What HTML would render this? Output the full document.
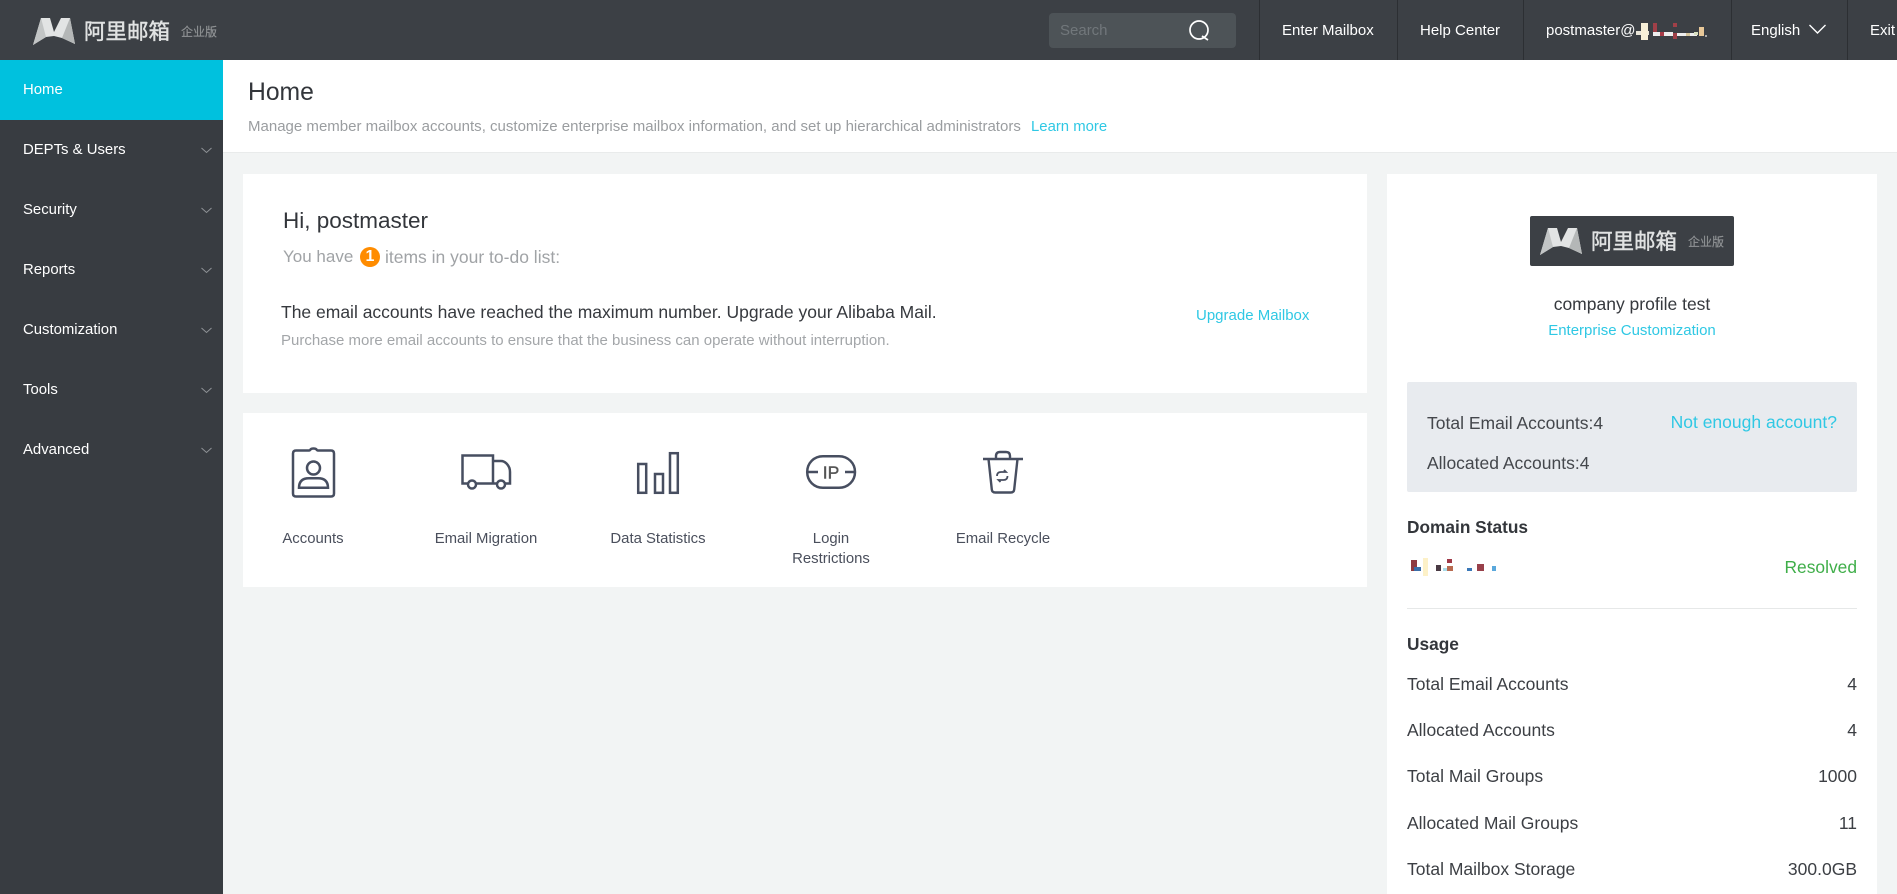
<!DOCTYPE html>
<html><head><meta charset="utf-8"><title>Home</title>
<style>
html,body{margin:0;padding:0;width:1897px;height:894px;overflow:hidden;background:#f2f4f4;font-family:"Liberation Sans",Arial,sans-serif;color:#3c3f44}
div,span,a{position:absolute;white-space:nowrap;line-height:20px}
svg{position:absolute;overflow:visible}
.f15{font-size:15px}.f17{font-size:17.5px}
.b{color:#2fc8e4}
.nav{left:23px;font-size:14.9px;color:#fff}
.lab{font-size:14.9px;color:#4a4f5c;text-align:center;width:140px}
.cn{font-family:"Noto Sans CJK SC",sans-serif;color:#e0e2e2;-webkit-text-stroke:.45px #e0e2e2}
.cn2{font-family:"Noto Sans CJK SC",sans-serif;color:#8f9294;-webkit-text-stroke:.2px #8f9294}
.rv{right:40px;font-size:17.5px}
.rl{left:1407px;font-size:17.5px}
.v{width:1px;top:0;height:60px;background:#2c2f33}
.hd{color:#fff;font-size:15px;top:21px}
</style></head><body>

<div style="left:0;top:0;width:1897px;height:60px;background:#3c4045"></div>
<div style="left:0;top:60px;width:223px;height:834px;background:#383c41"></div>
<div style="left:0;top:60px;width:223px;height:60px;background:#00c1de"></div>
<div style="left:223px;top:60px;width:1674px;height:92px;background:#fff;border-bottom:1px solid #e9ebeb"></div>

<!-- header logo -->
<svg style="left:33px;top:17px" width="44" height="28" viewBox="0 0 44 28">
<polygon points="0,28 8,1 17,1 21,15 28,1 37,1 42,27 29,21 21,19 13,20" fill="#e2e4e4"/>
<polygon points="0,28 8,1 13,20" fill="#c2c5c5"/>
<polygon points="29,21 37,1 42,27" fill="#b4b7b7"/>
</svg>
<div class="cn" style="left:84px;top:20px;font-size:21.5px;line-height:22px;">阿里邮箱</div>
<div class="cn2" style="left:181px;top:22px;font-size:12px">企业版</div>

<!-- search -->
<div style="left:1049px;top:13px;width:187px;height:35px;background:#4d5357;border-radius:4px"></div>
<div style="left:1060px;top:21px;font-size:15px;color:#71777b">Search</div>
<svg style="left:1188px;top:19px" width="22" height="24" viewBox="0 0 22 24" fill="none" stroke="#fff" stroke-width="1.7"><circle cx="11" cy="11" r="9"/><path d="M14 17l6 4"/></svg>

<div class="v" style="left:1259px"></div>
<div class="v" style="left:1397px"></div>
<div class="v" style="left:1523px"></div>
<div class="v" style="left:1731px"></div>
<div class="v" style="left:1847px"></div>
<div class="hd" style="left:1282px">Enter Mailbox</div>
<div class="hd" style="left:1420px">Help Center</div>
<div class="hd" style="left:1546px">postmaster@</div>
<svg style="left:1636px;top:21px" width="72" height="24" shape-rendering="crispEdges">
<rect x="0" y="10" width="13" height="4" fill="#e8e4d8"/><rect x="5" y="2" width="7" height="17" fill="#f8f0d8"/>
<rect x="17" y="2" width="4" height="10" fill="#a04048"/><rect x="17" y="11" width="20" height="4" fill="#eeeeee"/><rect x="24" y="11" width="4" height="4" fill="#a83c48"/>
<rect x="37" y="2" width="4" height="4" fill="#a04048"/><rect x="37" y="12" width="4" height="6" fill="#a04048"/><rect x="41" y="12" width="20" height="3" fill="#eeeeee"/><rect x="50" y="12" width="4" height="3" fill="#d8c8a0"/><rect x="58" y="11" width="4" height="3" fill="#d8e0c0"/>
<rect x="63" y="6" width="5" height="9" fill="#e8c898"/><rect x="69" y="14" width="2" height="2" fill="#aaaaaa"/>
</svg>
<div class="hd" style="left:1751px">English</div>
<svg style="left:1809px;top:24px" width="17" height="10" fill="none" stroke="#fff" stroke-width="1.4"><path d="M.5 1l8 8 8-8"/></svg>
<div class="hd" style="left:1870px">Exit</div>

<!-- sidebar -->
<div class="nav" style="top:80px">Home</div>
<div class="nav" style="top:140px">DEPTs &amp; Users</div>
<div class="nav" style="top:200px">Security</div>
<div class="nav" style="top:260px">Reports</div>
<div class="nav" style="top:320px">Customization</div>
<div class="nav" style="top:380px">Tools</div>
<div class="nav" style="top:440px">Advanced</div>
<svg style="left:201px;top:147px" width="11" height="7" fill="none" stroke="#8e9296" stroke-width="1"><path d="M.5 1l5 4.500 5-4.500"/></svg>
<svg style="left:201px;top:207px" width="11" height="7" fill="none" stroke="#8e9296" stroke-width="1"><path d="M.5 1l5 4.500 5-4.500"/></svg>
<svg style="left:201px;top:267px" width="11" height="7" fill="none" stroke="#8e9296" stroke-width="1"><path d="M.5 1l5 4.500 5-4.500"/></svg>
<svg style="left:201px;top:327px" width="11" height="7" fill="none" stroke="#8e9296" stroke-width="1"><path d="M.5 1l5 4.500 5-4.500"/></svg>
<svg style="left:201px;top:387px" width="11" height="7" fill="none" stroke="#8e9296" stroke-width="1"><path d="M.5 1l5 4.500 5-4.500"/></svg>
<svg style="left:201px;top:447px" width="11" height="7" fill="none" stroke="#8e9296" stroke-width="1"><path d="M.5 1l5 4.500 5-4.500"/></svg>

<!-- title -->
<div style="left:248px;top:83px;font-size:24.7px;color:#33363b">Home</div>
<div style="left:248px;top:117px;font-size:15.02px;color:#9a9da0">Manage member mailbox accounts, customize enterprise mailbox information, and set up hierarchical administrators</div>
<div class="b" style="left:1031px;top:117px;font-size:14.9px">Learn more</div>

<!-- card 1 -->
<div style="left:243px;top:174px;width:1124px;height:219px;background:#fff"></div>
<div style="left:283px;top:211px;font-size:22.5px;color:#33363b">Hi, postmaster</div>
<div style="left:283px;top:247px;font-size:17px;color:#a0a3a6">You have</div>
<div style="left:360px;top:247px;width:20px;height:20px;border-radius:50%;background:#ff8c00;color:#fff;font-size:16px;font-weight:bold;text-align:center">1</div>
<div style="left:385px;top:247px;font-size:17.5px;color:#a0a3a6">items in your to-do list:</div>
<div class="f17" style="left:281px;top:302px;color:#36393e">The email accounts have reached the maximum number. Upgrade your Alibaba Mail.</div>
<div class="f15" style="left:281px;top:331px;color:#a3a6a9">Purchase more email accounts to ensure that the business can operate without interruption.</div>
<div class="b f15" style="left:1196px;top:306px">Upgrade Mailbox</div>

<!-- card 2 -->
<div style="left:243px;top:413px;width:1124px;height:174px;background:#fff"></div>
<svg style="left:291px;top:448px" width="46" height="50" viewBox="0 0 46 50" fill="none" stroke="#474e60" stroke-width="2.5">
<path d="M5 2.500h13q1 0 1.500-1 .7-1 3-1t3 1q.5 1 1.500 1h13q3 0 3 3v40q0 3-3 3H5q-3 0-3-3v-40q0-3 3-3z"/>
<circle cx="22.500" cy="20" r="6.500"/>
<path d="M8 39.800q0-9.500 10-9.500h9q10 0 10 9.500z"/>
</svg>
<svg style="left:461px;top:454px" width="51" height="36" viewBox="0 0 51 36" fill="none" stroke="#474e60" stroke-width="2.500">
<path d="M7 29.500H1.500V1.500H32V29"/>
<path d="M32 7h8q3 0 5.500 2.500 3.500 3.500 3.500 8.500v11.500H44"/>
<path d="M15 29.500h21"/>
<circle cx="11" cy="30.500" r="4"/>
<circle cx="40" cy="30.500" r="4"/>
</svg>
<svg style="left:637px;top:452px" width="42" height="42" viewBox="0 0 42 42" fill="none" stroke="#474e60" stroke-width="2.500">
<rect x="1.200" y="12" width="8" height="28.800"/>
<rect x="18" y="22" width="8" height="18.800"/>
<rect x="33" y="1.200" width="7.800" height="39.600"/>
</svg>
<svg style="left:806px;top:455px" width="51" height="35" viewBox="0 0 51 35" fill="none" stroke="#474e60" stroke-width="2.500">
<path d="M1.200 17C1.200 8 8 1.200 17 1.200h16C42 1.200 49 8 49 17s-7 15.800-16 15.800H17C8 32.800 1.200 26 1.200 17z"/>
<path d="M1 17h11M39 17h11"/>
<text x="25" y="23.500" text-anchor="middle" font-size="17.500" fill="#555" stroke="#555" stroke-width=".4" font-family="Liberation Sans,sans-serif">IP</text>
</svg>
<svg style="left:983px;top:451px" width="41" height="43" viewBox="0 0 41 43" fill="none" stroke="#474e60" stroke-width="2.400">
<path d="M0 8h40"/>
<path d="M13 8V5q0-4 4-4h6q4 0 4 4v3"/>
<path d="M5.500 8l3.300 30.500q.3 3 3.500 3h15.400q3.200 0 3.500-3L34.500 8"/>
<path d="M14 25q0-4 4-4h5l-2-2M24.500 25q0 4-4 4h-5l2 2" stroke-width="1.800"/>
</svg>
<div class="lab" style="left:243px;top:529px">Accounts</div>
<div class="lab" style="left:416px;top:529px">Email Migration</div>
<div class="lab" style="left:588px;top:529px">Data Statistics</div>
<div class="lab" style="left:761px;top:529px">Login</div>
<div class="lab" style="left:761px;top:549px">Restrictions</div>
<div class="lab" style="left:933px;top:529px">Email Recycle</div>

<!-- right card -->
<div style="left:1387px;top:174px;width:490px;height:720px;background:#fff"></div>
<div style="left:1530px;top:216px;width:204px;height:50px;background:#3c4045;border-radius:2px"></div>
<svg style="left:1540px;top:227px" width="44" height="28" viewBox="0 0 44 28">
<polygon points="0,28 8,1 17,1 21,15 28,1 37,1 42,27 29,21 21,19 13,20" fill="#e2e4e4"/>
<polygon points="0,28 8,1 13,20" fill="#c2c5c5"/>
<polygon points="29,21 37,1 42,27" fill="#b4b7b7"/>
</svg>
<div class="cn" style="left:1591px;top:230px;font-size:21.5px;line-height:22px">阿里邮箱</div>
<div class="cn2" style="left:1688px;top:232px;font-size:12px">企业版</div>
<div class="f17" style="left:1487px;width:290px;text-align:center;top:294px;color:#36393e">company profile test</div>
<div class="b f15" style="left:1487px;width:290px;text-align:center;top:321px">Enterprise Customization</div>

<div style="left:1407px;top:382px;width:450px;height:110px;background:#e8ebef;border-radius:2px"></div>
<div class="f17" style="left:1427px;top:413px;color:#44474c">Total Email Accounts:4</div>
<div class="f17" style="left:1427px;top:453px;color:#44474c">Allocated Accounts:4</div>
<div class="b" style="right:60px;top:412px;font-size:17.5px">Not enough account?</div>

<div style="left:1407px;top:517px;font-size:17.3px;font-weight:bold;color:#33363b">Domain Status</div>
<svg style="left:1409px;top:558px" width="88" height="18" shape-rendering="crispEdges">
<rect x="2" y="2" width="6" height="11" fill="#8e3a40"/><rect x="5" y="9" width="7" height="4" fill="#3a6ea8"/>
<rect x="14" y="0" width="5" height="18" fill="#fdf1c8"/>
<rect x="27" y="7" width="5" height="6" fill="#4a3a44"/><rect x="34" y="10" width="6" height="3" fill="#a8dcea"/>
<rect x="38" y="1" width="5" height="4" fill="#a03a48"/><rect x="38" y="8" width="6" height="5" fill="#b86a50"/>
<rect x="58" y="10" width="5" height="3" fill="#3a78b8"/><rect x="68" y="6" width="7" height="7" fill="#98404a"/>
<rect x="83" y="8" width="4" height="5" fill="#5aa8dc"/>
</svg>
<div style="right:40px;top:557px;font-size:17.4px;color:#3fae49">Resolved</div>
<div style="left:1407px;top:608px;width:450px;height:1px;background:#e6e8e8"></div>
<div style="left:1407px;top:634px;font-size:17.3px;font-weight:bold;color:#33363b">Usage</div>

<div class="rl" style="top:674px">Total Email Accounts</div><div class="rv" style="top:674px">4</div>
<div class="rl" style="top:720px">Allocated Accounts</div><div class="rv" style="top:720px">4</div>
<div class="rl" style="top:766px">Total Mail Groups</div><div class="rv" style="top:766px">1000</div>
<div class="rl" style="top:813px">Allocated Mail Groups</div><div class="rv" style="top:813px">11</div>
<div class="rl" style="top:859px">Total Mailbox Storage</div><div class="rv" style="top:859px">300.0GB</div>
</body></html>
